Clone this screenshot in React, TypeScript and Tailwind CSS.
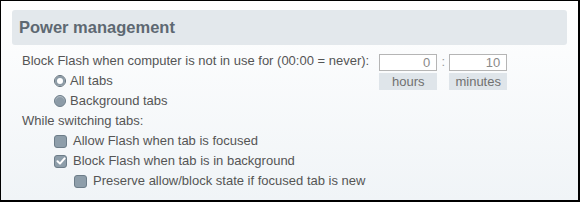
import React from "react";

const Radio: React.FC<{ filled?: boolean; label: string }> = ({ filled, label }) => (
  <div className="flex items-center h-5">
    <span
      className={
        filled
          ? "w-[12px] h-[12px] rounded-full border border-[#6f7f8b] bg-[#8c9ba7] shadow-[inset_0_1px_1px_rgba(255,255,255,0.4)]"
          : "w-[12px] h-[12px] rounded-full border border-[#5f6e79] bg-white shadow-[inset_0_0_0_2px_#8c9ba6]"
      }
    />
    <span className="ml-[4px]">{label}</span>
  </div>
);

const Check: React.FC<{ checked?: boolean; label: string; indent?: boolean }> = ({ checked, label, indent }) => (
  <div className={indent ? "flex items-center h-5 pl-[20px]" : "flex items-center h-5"}>
    <span className="w-[13px] h-[13px] rounded-[3px] border border-[#6d7d89] bg-[#8e9eaa] flex items-center justify-center">
      {checked && (
        <svg width="10" height="10" viewBox="0 0 10 10">
          <path d="M1.5 5.2 L4 7.6 L8.6 2.4" fill="none" stroke="white" strokeWidth="2" strokeLinecap="round" strokeLinejoin="round" />
        </svg>
      )}
    </span>
    <span className="ml-[6px]">{label}</span>
  </div>
);

const TimeBox: React.FC<{ value: string; label: string }> = ({ value, label }) => (
  <div className="flex flex-col w-[58px]">
    <div className="h-[17px] bg-white border border-[#b5b5b5] text-right pr-[6px] text-[#8a8a8a] leading-[15px]">
      {value}
    </div>
    <div className="mt-[2px] h-[17px] bg-[#dfe5ea] text-center text-[#707070] leading-[17px]">{label}</div>
  </div>
);

export default function App() {
  return (
    <div
      className="w-[580px] h-[202px] border-t border-l border-r-2 border-b-2 border-black bg-gradient-to-b from-white to-[#f0f4f7] text-[13px] text-[#555] overflow-hidden"
      style={{ fontFamily: '"Liberation Sans", Arial, sans-serif' }}
    >
      <div className="mx-[11px] mt-[9px] h-[35px] rounded-[3px] bg-[#e3e8ec] flex items-center px-[7px]">
        <span className="text-[16.5px] font-bold text-[#5e6872]">Power management</span>
      </div>
      <div className="pl-[21px] pt-[6px]">
        <div className="flex items-start">
          <div>
            <div className="h-5 leading-5">Block Flash when computer is not in use for (00:00 = never):</div>
            <div className="pl-[32px]">
              <Radio label="All tabs" />
              <Radio filled label="Background tabs" />
            </div>
          </div>
          <div className="flex items-start ml-[10px] mt-[3px]">
            <TimeBox value="0" label="hours" />
            <span className="w-[12px] text-center text-[#999] leading-[15px]">:</span>
            <TimeBox value="10" label="minutes" />
          </div>
        </div>
        <div className="h-5 leading-5">While switching tabs:</div>
        <div className="pl-[32px]">
          <Check label="Allow Flash when tab is focused" />
          <Check checked label="Block Flash when tab is in background" />
          <Check indent label="Preserve allow/block state if focused tab is new" />
        </div>
      </div>
    </div>
  );
}
